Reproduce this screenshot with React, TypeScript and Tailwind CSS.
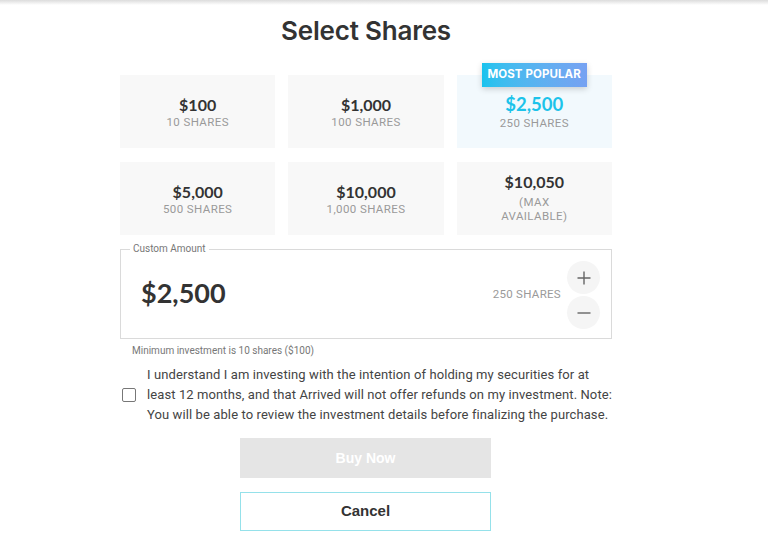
import React from "react";

const presets = [
  { id: "100", amount: "$100", shares: "10 SHARES" },
  { id: "1000", amount: "$1,000", shares: "100 SHARES" },
  { id: "2500", amount: "$2,500", shares: "250 SHARES", popular: true },
  { id: "5000", amount: "$5,000", shares: "500 SHARES" },
  { id: "10000", amount: "$10,000", shares: "1,000 SHARES" },
  { id: "max", amount: "$10,050", shares: "(MAX AVAILABLE)", max: true },
];

export default function App() {
  return (
    <div className="w-[768px] h-[553px] bg-white relative overflow-hidden font-['Roboto',sans-serif]">
      {/* top edge shadow */}
      <div className="h-[5px] bg-gradient-to-b from-[#dcdcdc] to-white" />

      <div className="w-[492px] ml-[120px] flex flex-col">
        <h1 className="text-center text-[26px] leading-[32px] font-semibold text-[#333] font-['Inter',sans-serif] tracking-[-0.2px] mt-[10px]">
          Select Shares
        </h1>

        {/* preset grid */}
        <div className="grid grid-cols-3 gap-x-[13px] gap-y-[14px] mt-[28px]">
          {presets.map((p) => (
            <div
              key={p.id}
              className={`relative h-[73px] flex flex-col items-center justify-center ${
                p.popular ? "bg-[#f2f9fd]" : "bg-[#f8f8f8]"
              }`}
            >
              {p.popular && (
                <div className="absolute -top-[12px] left-[25px] w-[105px] h-[24px] flex items-center justify-center bg-gradient-to-r from-[#17c3ee] to-[#76a1f2] text-white text-[11.5px] font-bold tracking-[0.1px] shadow-[0_2px_6px_rgba(0,0,0,0.18)] font-['Inter',sans-serif]">
                  MOST POPULAR
                </div>
              )}
              <div
                className={`font-['Lato',sans-serif] font-bold ${
                  p.popular ? "text-[#1cc3ea] text-[18.5px] leading-[22px]" : "text-[#333] text-[16px] leading-[20px]"
                } ${p.max ? "-mt-[3px]" : ""}`}
              >
                {p.amount}
              </div>
              <div
                className={`text-[11.5px] leading-[14px] text-[#9a9a9a] tracking-[0.4px] text-center ${
                  p.max ? "w-[80px] mt-[3px]" : ""
                } ${p.popular ? "mt-[1px]" : ""}`}
              >
                {p.shares}
              </div>
            </div>
          ))}
        </div>

        {/* custom amount */}
        <div className="relative mt-[14px] border border-[#dadada] h-[90px] pl-[20px] pr-[11px] flex items-center">
          <span className="absolute -top-[7px] left-[9px] px-[3px] bg-white text-[10px] text-[#777] leading-[12px]">
            Custom Amount
          </span>
          <div className="text-[27px] font-bold text-[#333] font-['Lato',sans-serif] -mt-[1px]">$2,500</div>
          <div className="ml-auto text-[11.5px] text-[#9a9a9a] tracking-[0.3px] mr-[6px] mt-[2px]">250 SHARES</div>
          <div className="flex flex-col gap-[2px] mt-[2px]">
            <button className="w-[33px] h-[33px] rounded-full bg-[#f5f5f5] flex items-center justify-center">
              <svg width="14" height="14" viewBox="0 0 14 14">
                <path d="M7 0.5v13M0.5 7h13" stroke="#666" strokeWidth="1.4" />
              </svg>
            </button>
            <button className="w-[33px] h-[33px] rounded-full bg-[#f5f5f5] flex items-center justify-center">
              <svg width="14" height="14" viewBox="0 0 14 14">
                <path d="M0.5 7h13" stroke="#666" strokeWidth="1.4" />
              </svg>
            </button>
          </div>
        </div>

        <p className="ml-[12px] mt-[5px] text-[10px] leading-[14px] text-[#777]">
          Minimum investment is 10 shares ($100)
        </p>

        {/* agreement */}
        <div className="flex items-center mt-[7px] ml-[2px]">
          <div className="w-[14px] h-[14px] border-[1.5px] border-[#777] rounded-[2px] shrink-0" />
          <p className="ml-[11px] text-[13px] tracking-[0.1px] leading-[20px] text-[#444] whitespace-nowrap">
            I understand I am investing with the intention of holding my securities for at
            <br />
            least 12 months, and that Arrived will not offer refunds on my investment. Note:
            <br />
            You will be able to review the investment details before finalizing the purchase.
          </p>
        </div>

        {/* actions */}
        <div className="flex flex-col items-center mt-[13px] -ml-[1px]">
          <button className="w-[251px] h-[40px] bg-[#e5e5e5] text-white text-[14px] font-bold font-['Liberation_Sans',sans-serif]">
            Buy Now
          </button>
          <button className="w-[251px] h-[39px] mt-[14px] border border-[#95e1ea] bg-white text-[#333] text-[15px] font-bold font-['Liberation_Sans',sans-serif]">
            Cancel
          </button>
        </div>
      </div>
    </div>
  );
}
